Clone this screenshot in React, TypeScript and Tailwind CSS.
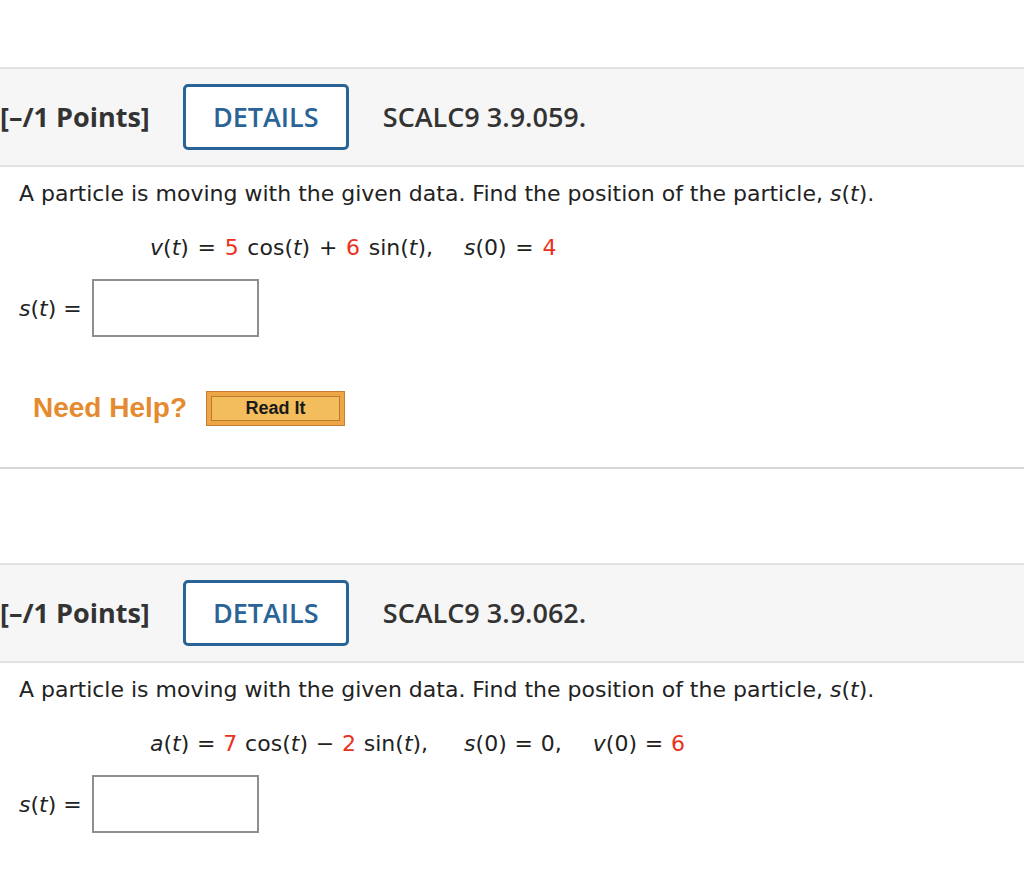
import React from 'react';

const R: React.FC<{ children: React.ReactNode }> = ({ children }) => (
  <span className="text-[#e8321e]">{children}</span>
);

const I: React.FC<{ children: React.ReactNode }> = ({ children }) => <i>{children}</i>;

const Gap: React.FC<{ w: string }> = ({ w }) => <span className={`inline-block ${w}`} />;

const Header: React.FC<{ code: string }> = ({ code }) => (
  <div className="flex h-[100px] items-center border-y-2 border-[#e2e2e2] bg-[#f6f6f6] font-['Open_Sans',sans-serif]">
    <span className="text-[27px] font-bold text-[#333]">[–/1 Points]</span>
    <button className="ml-[33px] flex h-[66px] w-[166px] items-center justify-center rounded-[5px] border-[3px] border-[#2a6496] bg-white text-[27px] font-semibold text-[#2a6496]">
      DETAILS
    </button>
    <span className="ml-[34px] text-[27px] font-semibold text-[#333]">{code}</span>
  </div>
);

const Answer: React.FC = () => (
  <div className="flex items-center gap-[10px]">
    <span><I>s</I>(<I>t</I>) =</span>
    <div className="h-[58px] w-[167px] border-2 border-[#8e8e8e] bg-white" />
  </div>
);

export default function App() {
  return (
    <div className="min-h-[882px] w-[1024px] overflow-hidden bg-white font-['DejaVu_Sans',sans-serif] text-[22px] text-[#222]">
      <div className="h-[67px]" />

      <Header code="SCALC9 3.9.059." />
      <div className="border-b-2 border-[#d6d6d6] pl-[19px]">
        <p className="pt-[13px] leading-[28px]">
          A particle is moving with the given data. Find the position of the particle, <I>s</I>(<I>t</I>).
        </p>
        <p className="ml-[131px] mt-[26px] leading-[28px] [word-spacing:1.7px]">
          <I>v</I>(<I>t</I>) = <R>5</R> cos(<I>t</I>) + <R>6</R> sin(<I>t</I>),<Gap w="w-[31px]" /><I>s</I>(0) = <R>4</R>
        </p>
        <div className="mt-[17px]">
          <Answer />
        </div>
        <div className="mt-[53px] flex h-[36px] items-center pl-[14px]">
          <span className="font-['Liberation_Sans',sans-serif] text-[28px] font-bold text-[#e58a2e]">Need Help?</span>
          <button className="ml-[19px] flex h-[35px] w-[139px] items-center justify-center border border-[#c47f36] bg-[#eea543] p-[4px]">
            <span className="flex h-full w-full items-center justify-center border border-[#b77a35] bg-[#f2bd5a] font-['Liberation_Sans',sans-serif] text-[18px] font-bold text-[#1a1a1a]">
              Read It
            </span>
          </button>
        </div>
        <div className="h-[41px]" />
      </div>

      <div className="h-[94px]" />

      <Header code="SCALC9 3.9.062." />
      <div className="pl-[19px]">
        <p className="pt-[13px] leading-[28px]">
          A particle is moving with the given data. Find the position of the particle, <I>s</I>(<I>t</I>).
        </p>
        <p className="ml-[131px] mt-[26px] leading-[28px] [word-spacing:0.8px]">
          <I>a</I>(<I>t</I>) = <R>7</R> cos(<I>t</I>) − <R>2</R> sin(<I>t</I>),<Gap w="w-[36px]" /><I>s</I>(0) = 0,<Gap w="w-[31px]" /><I>v</I>(0) = <R>6</R>
        </p>
        <div className="mt-[17px]">
          <Answer />
        </div>
      </div>
    </div>
  );
}
